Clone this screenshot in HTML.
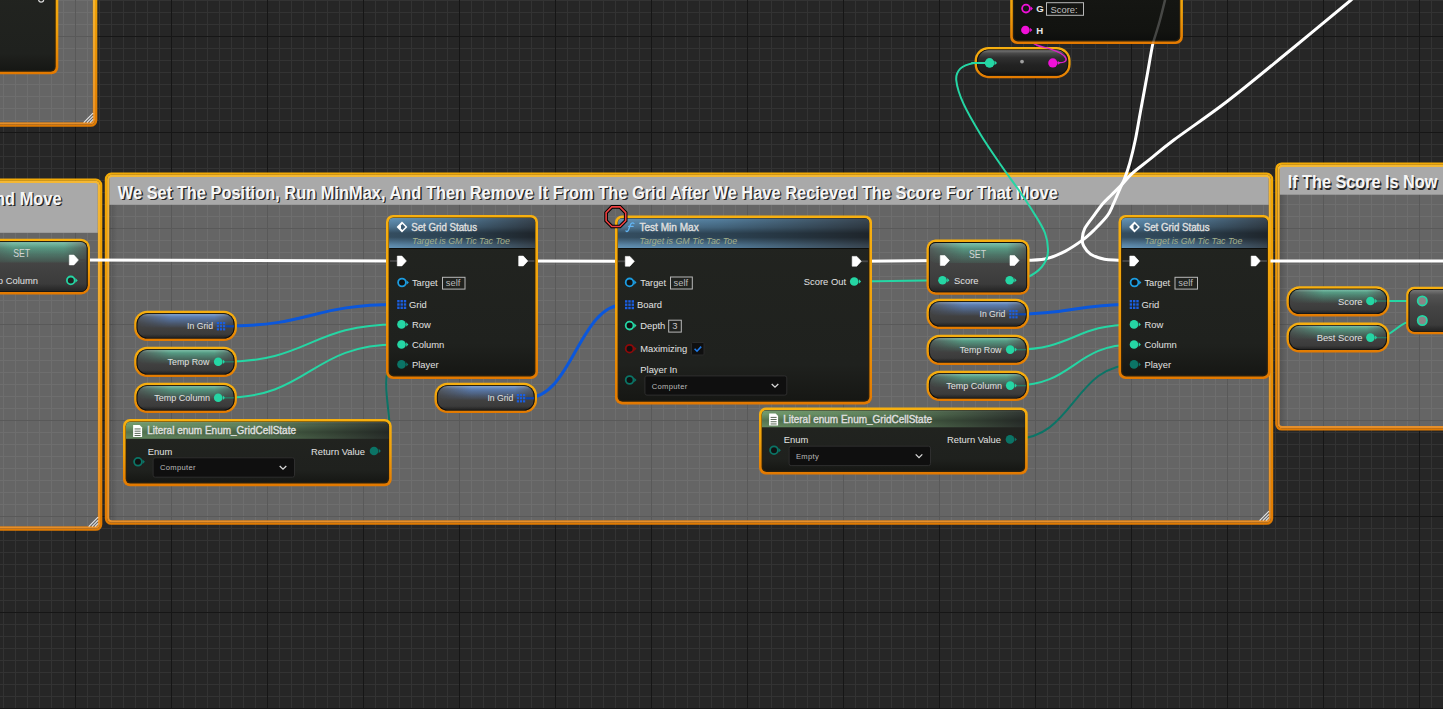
<!DOCTYPE html>
<html><head><meta charset="utf-8">
<style>
html,body{margin:0;padding:0;width:1443px;height:709px;overflow:hidden;}
body{background-color:#262626;
background-image:
 linear-gradient(90deg,#161616 1px,transparent 1px),
 linear-gradient(180deg,#161616 1px,transparent 1px),
 linear-gradient(90deg,#333333 1px,transparent 1px),
 linear-gradient(180deg,#333333 1px,transparent 1px);
background-size:96px 709px,1443px 96px,12px 709px,1443px 12px;
background-position:75px 0,0 36px,3px 0,0 0;
}
svg{position:absolute;left:0;top:0;font-family:"Liberation Sans",sans-serif;}
</style></head><body>
<svg width="1443" height="709" viewBox="0 0 1443 709">
<defs>
<linearGradient id="gOrC" x1="0" y1="0" x2="0" y2="1">
  <stop offset="0" stop-color="#f2aa06"/><stop offset="1" stop-color="#e07a02"/>
</linearGradient>
<linearGradient id="gOrC2" x1="0" y1="0" x2="0" y2="1">
  <stop offset="0" stop-color="#f4b834"/><stop offset="1" stop-color="#e68f2a"/>
</linearGradient>
<linearGradient id="gOrN" x1="0" y1="0" x2="0" y2="1">
  <stop offset="0" stop-color="#f7b010"/><stop offset="0.5" stop-color="#f0a00a"/><stop offset="1" stop-color="#e27800"/>
</linearGradient>
<linearGradient id="gShL" x1="0" y1="0" x2="1" y2="0">
  <stop offset="0" stop-color="#000" stop-opacity="0.16"/><stop offset="1" stop-color="#000" stop-opacity="0"/>
</linearGradient>
<linearGradient id="gPill" x1="0" y1="0" x2="0" y2="1">
  <stop offset="0" stop-color="#606060" stop-opacity="0.92"/><stop offset="0.4" stop-color="#4c4c4c" stop-opacity="0.88"/><stop offset="1" stop-color="#3c3c3c" stop-opacity="0.9"/>
</linearGradient>
<linearGradient id="gPillDark" x1="0" y1="0" x2="0" y2="1">
  <stop offset="0" stop-color="#5a5a5a"/><stop offset="0.3" stop-color="#303030"/><stop offset="0.6" stop-color="#222222"/><stop offset="1" stop-color="#1c1c1b"/>
</linearGradient>
<linearGradient id="gPillSh" x1="0" y1="0" x2="0" y2="1">
  <stop offset="0" stop-color="#fff" stop-opacity="0.18"/><stop offset="0.12" stop-color="#fff" stop-opacity="0"/><stop offset="0.85" stop-color="#000" stop-opacity="0"/><stop offset="1" stop-color="#000" stop-opacity="0.35"/>
</linearGradient>
<linearGradient id="gGlowBlue" x1="0" y1="0" x2="0" y2="1">
  <stop offset="0" stop-color="#6aa0f0" stop-opacity="0.75"/><stop offset="0.45" stop-color="#5a8ee0" stop-opacity="0.45"/><stop offset="1" stop-color="#5a8ee0" stop-opacity="0"/>
</linearGradient>
<linearGradient id="gGlowTeal" x1="0" y1="0" x2="0" y2="1">
  <stop offset="0" stop-color="#60d8b0" stop-opacity="0.7"/><stop offset="0.45" stop-color="#50c8a0" stop-opacity="0.4"/><stop offset="1" stop-color="#50c8a0" stop-opacity="0"/>
</linearGradient>
<linearGradient id="gGlowSet" x1="0" y1="0" x2="0" y2="1">
  <stop offset="0" stop-color="#64dcb4" stop-opacity="0.7"/><stop offset="0.6" stop-color="#50c8a0" stop-opacity="0.32"/><stop offset="1" stop-color="#50c8a0" stop-opacity="0.1"/>
</linearGradient>
<linearGradient id="gMaskH" x1="0" y1="0" x2="1" y2="0">
  <stop offset="0" stop-color="#fff" stop-opacity="0.15"/><stop offset="0.35" stop-color="#fff" stop-opacity="1"/><stop offset="0.8" stop-color="#fff" stop-opacity="1"/><stop offset="1" stop-color="#fff" stop-opacity="0.2"/>
</linearGradient>
<mask id="mGlowH" maskContentUnits="objectBoundingBox"><rect x="0" y="0" width="1" height="1" fill="url(#gMaskH)"/></mask>
<linearGradient id="gHdrFnH" x1="0" y1="0" x2="1" y2="0">
  <stop offset="0" stop-color="#6494b8"/><stop offset="0.4" stop-color="#55809f"/><stop offset="1" stop-color="#3a4753"/>
</linearGradient>
<linearGradient id="gHdrFnV" x1="0" y1="0" x2="0" y2="1">
  <stop offset="0" stop-color="#000" stop-opacity="0.0"/><stop offset="0.3" stop-color="#000" stop-opacity="0.22"/><stop offset="0.5" stop-color="#000" stop-opacity="0.48"/><stop offset="0.64" stop-color="#000" stop-opacity="0.48"/><stop offset="0.9" stop-color="#000" stop-opacity="0.1"/><stop offset="1" stop-color="#000" stop-opacity="0.0"/>
</linearGradient>
<linearGradient id="gHdrLitH" x1="0" y1="0" x2="1" y2="0">
  <stop offset="0" stop-color="#709a6c"/><stop offset="0.5" stop-color="#5d7f5a"/><stop offset="1" stop-color="#2f3531"/>
</linearGradient>
<linearGradient id="gHdrLitV" x1="0" y1="0" x2="0" y2="1">
  <stop offset="0" stop-color="#fff" stop-opacity="0.10"/><stop offset="0.2" stop-color="#000" stop-opacity="0.0"/><stop offset="0.6" stop-color="#000" stop-opacity="0.25"/><stop offset="1" stop-color="#000" stop-opacity="0.1"/>
</linearGradient>
<linearGradient id="gBody" x1="0" y1="0" x2="0" y2="1">
  <stop offset="0" stop-color="#222420"/><stop offset="0.8" stop-color="#1f211e"/><stop offset="1" stop-color="#161714"/>
</linearGradient>
<linearGradient id="gBodyTop" x1="0" y1="0" x2="0" y2="1">
  <stop offset="0" stop-color="#161714"/><stop offset="0.85" stop-color="#121310"/><stop offset="1" stop-color="#0e0f0d"/>
</linearGradient>
</defs>
<rect x="-15.5" y="-15.5" width="108.3" height="137.8" fill="#ffffff" fill-opacity="0.29"/>
<rect x="-15.5" y="-15.5" width="8" height="137.8" fill="url(#gShL)"/>
<path fill-rule="evenodd" fill="url(#gOrC)" d="M-13.50 -20.00h104.30a6.50 6.50 0 0 1 6.50 6.50v133.80a6.50 6.50 0 0 1 -6.50 6.50h-104.30a6.50 6.50 0 0 1 -6.50 -6.50v-133.80a6.50 6.50 0 0 1 6.50 -6.50z M-13.20 -17.70h103.70a4.50 4.50 0 0 1 4.50 4.50v133.20a4.50 4.50 0 0 1 -4.50 4.50h-103.70a4.50 4.50 0 0 1 -4.50 -4.50v-133.20a4.50 4.50 0 0 1 4.50 -4.50z"/>
<path fill-rule="evenodd" fill="url(#gOrC2)" d="M-13.20 -17.70h103.70a4.50 4.50 0 0 1 4.50 4.50v133.20a4.50 4.50 0 0 1 -4.50 4.50h-103.70a4.50 4.50 0 0 1 -4.50 -4.50v-133.20a4.50 4.50 0 0 1 4.50 -4.50z M-13.00 -15.50h103.30a2.50 2.50 0 0 1 2.50 2.50v132.80a2.50 2.50 0 0 1 -2.50 2.50h-103.30a2.50 2.50 0 0 1 -2.50 -2.50v-132.80a2.50 2.50 0 0 1 2.50 -2.50z"/>
<line x1="89.9" y1="122.6" x2="93.1" y2="119.4" stroke="#ffffff" stroke-width="1.1" stroke-opacity="0.85"/>
<line x1="86.9" y1="122.6" x2="93.1" y2="116.4" stroke="#ffffff" stroke-width="1.1" stroke-opacity="0.85"/>
<line x1="83.7" y1="122.6" x2="93.1" y2="113.2" stroke="#ffffff" stroke-width="1.1" stroke-opacity="0.85"/>
<rect x="-15.5" y="183.0" width="113.3" height="343.3" fill="#ffffff" fill-opacity="0.29"/>
<rect x="-15.5" y="183.0" width="8" height="343.3" fill="url(#gShL)"/>
<rect x="-15.5" y="183.0" width="113.3" height="49.8" fill="#a9a9a9"/>
<path fill-rule="evenodd" fill="url(#gOrC)" d="M-13.50 178.50h109.30a6.50 6.50 0 0 1 6.50 6.50v339.30a6.50 6.50 0 0 1 -6.50 6.50h-109.30a6.50 6.50 0 0 1 -6.50 -6.50v-339.30a6.50 6.50 0 0 1 6.50 -6.50z M-13.20 180.80h108.70a4.50 4.50 0 0 1 4.50 4.50v338.70a4.50 4.50 0 0 1 -4.50 4.50h-108.70a4.50 4.50 0 0 1 -4.50 -4.50v-338.70a4.50 4.50 0 0 1 4.50 -4.50z"/>
<path fill-rule="evenodd" fill="url(#gOrC2)" d="M-13.20 180.80h108.70a4.50 4.50 0 0 1 4.50 4.50v338.70a4.50 4.50 0 0 1 -4.50 4.50h-108.70a4.50 4.50 0 0 1 -4.50 -4.50v-338.70a4.50 4.50 0 0 1 4.50 -4.50z M-13.00 183.00h108.30a2.50 2.50 0 0 1 2.50 2.50v338.30a2.50 2.50 0 0 1 -2.50 2.50h-108.30a2.50 2.50 0 0 1 -2.50 -2.50v-338.30a2.50 2.50 0 0 1 2.50 -2.50z"/>
<text x="62.9" y="206.4" font-size="18.00" fill="#262626" font-weight="bold" font-style="normal" text-anchor="end" textLength="105.6" lengthAdjust="spacingAndGlyphs">Second Move</text>
<text x="61.5" y="205.0" font-size="18.00" fill="#f6f6f6" font-weight="bold" font-style="normal" text-anchor="end" textLength="105.6" lengthAdjust="spacingAndGlyphs" >Second Move</text>
<line x1="94.9" y1="526.6" x2="98.1" y2="523.4" stroke="#ffffff" stroke-width="1.1" stroke-opacity="0.85"/>
<line x1="91.9" y1="526.6" x2="98.1" y2="520.4" stroke="#ffffff" stroke-width="1.1" stroke-opacity="0.85"/>
<line x1="88.7" y1="526.6" x2="98.1" y2="517.2" stroke="#ffffff" stroke-width="1.1" stroke-opacity="0.85"/>
<rect x="109.3" y="177.0" width="1159.4" height="343.3" fill="#ffffff" fill-opacity="0.29"/>
<rect x="109.3" y="177.0" width="8" height="343.3" fill="url(#gShL)"/>
<rect x="109.3" y="177.0" width="1159.4" height="27.8" fill="#a9a9a9"/>
<path fill-rule="evenodd" fill="url(#gOrC)" d="M111.30 172.50h1155.40a6.50 6.50 0 0 1 6.50 6.50v339.30a6.50 6.50 0 0 1 -6.50 6.50h-1155.40a6.50 6.50 0 0 1 -6.50 -6.50v-339.30a6.50 6.50 0 0 1 6.50 -6.50z M111.60 174.80h1154.80a4.50 4.50 0 0 1 4.50 4.50v338.70a4.50 4.50 0 0 1 -4.50 4.50h-1154.80a4.50 4.50 0 0 1 -4.50 -4.50v-338.70a4.50 4.50 0 0 1 4.50 -4.50z"/>
<path fill-rule="evenodd" fill="url(#gOrC2)" d="M111.60 174.80h1154.80a4.50 4.50 0 0 1 4.50 4.50v338.70a4.50 4.50 0 0 1 -4.50 4.50h-1154.80a4.50 4.50 0 0 1 -4.50 -4.50v-338.70a4.50 4.50 0 0 1 4.50 -4.50z M111.80 177.00h1154.40a2.50 2.50 0 0 1 2.50 2.50v338.30a2.50 2.50 0 0 1 -2.50 2.50h-1154.40a2.50 2.50 0 0 1 -2.50 -2.50v-338.30a2.50 2.50 0 0 1 2.50 -2.50z"/>
<text x="119.2" y="200.4" font-size="18.00" fill="#262626" font-weight="bold" font-style="normal" text-anchor="start" textLength="940.0" lengthAdjust="spacingAndGlyphs">We Set The Position, Run MinMax, And Then Remove It From The Grid After We Have Recieved The Score For That Move</text>
<text x="117.8" y="199.0" font-size="18.00" fill="#f6f6f6" font-weight="bold" font-style="normal" text-anchor="start" textLength="940.0" lengthAdjust="spacingAndGlyphs" >We Set The Position, Run MinMax, And Then Remove It From The Grid After We Have Recieved The Score For That Move</text>
<line x1="1265.8" y1="520.6" x2="1269.0" y2="517.4" stroke="#ffffff" stroke-width="1.1" stroke-opacity="0.85"/>
<line x1="1262.8" y1="520.6" x2="1269.0" y2="514.4" stroke="#ffffff" stroke-width="1.1" stroke-opacity="0.85"/>
<line x1="1259.6" y1="520.6" x2="1269.0" y2="511.2" stroke="#ffffff" stroke-width="1.1" stroke-opacity="0.85"/>
<rect x="1279.7" y="166.9" width="178.8" height="259.2" fill="#ffffff" fill-opacity="0.29"/>
<rect x="1279.7" y="166.9" width="8" height="259.2" fill="url(#gShL)"/>
<rect x="1279.7" y="166.9" width="178.8" height="27.8" fill="#a9a9a9"/>
<path fill-rule="evenodd" fill="url(#gOrC)" d="M1281.70 162.40h174.80a6.50 6.50 0 0 1 6.50 6.50v255.20a6.50 6.50 0 0 1 -6.50 6.50h-174.80a6.50 6.50 0 0 1 -6.50 -6.50v-255.20a6.50 6.50 0 0 1 6.50 -6.50z M1282.00 164.70h174.20a4.50 4.50 0 0 1 4.50 4.50v254.60a4.50 4.50 0 0 1 -4.50 4.50h-174.20a4.50 4.50 0 0 1 -4.50 -4.50v-254.60a4.50 4.50 0 0 1 4.50 -4.50z"/>
<path fill-rule="evenodd" fill="url(#gOrC2)" d="M1282.00 164.70h174.20a4.50 4.50 0 0 1 4.50 4.50v254.60a4.50 4.50 0 0 1 -4.50 4.50h-174.20a4.50 4.50 0 0 1 -4.50 -4.50v-254.60a4.50 4.50 0 0 1 4.50 -4.50z M1282.20 166.90h173.80a2.50 2.50 0 0 1 2.50 2.50v254.20a2.50 2.50 0 0 1 -2.50 2.50h-173.80a2.50 2.50 0 0 1 -2.50 -2.50v-254.20a2.50 2.50 0 0 1 2.50 -2.50z"/>
<text x="1289.1" y="189.7" font-size="18.00" fill="#262626" font-weight="bold" font-style="normal" text-anchor="start" textLength="149.6" lengthAdjust="spacingAndGlyphs">If The Score Is Now</text>
<text x="1287.7" y="188.3" font-size="18.00" fill="#f6f6f6" font-weight="bold" font-style="normal" text-anchor="start" textLength="149.6" lengthAdjust="spacingAndGlyphs" >If The Score Is Now</text>
<line x1="1455.6" y1="426.4" x2="1458.8" y2="423.2" stroke="#ffffff" stroke-width="1.1" stroke-opacity="0.85"/>
<line x1="1452.6" y1="426.4" x2="1458.8" y2="420.2" stroke="#ffffff" stroke-width="1.1" stroke-opacity="0.85"/>
<line x1="1449.4" y1="426.4" x2="1458.8" y2="417.0" stroke="#ffffff" stroke-width="1.1" stroke-opacity="0.85"/>
<path d="M77.5 260 L397 261" fill="none" stroke="#ffffff" stroke-width="3.0" stroke-opacity="1.00" stroke-linecap="round"/>
<path d="M527 261 L625 261.3" fill="none" stroke="#ffffff" stroke-width="3.0" stroke-opacity="1.00" stroke-linecap="round"/>
<path d="M860.7 261.3 L940 260.5" fill="none" stroke="#ffffff" stroke-width="3.0" stroke-opacity="1.00" stroke-linecap="round"/>
<path d="M1018.0 260.5C1022.5 260.2 1037.2 260.5 1045.0 259.0C1052.8 257.5 1058.7 254.5 1065.0 251.3C1071.3 248.1 1077.9 243.5 1082.8 239.9C1087.7 236.3 1090.5 233.5 1094.6 229.5C1098.7 225.5 1104.3 219.9 1107.4 215.7C1110.5 211.5 1110.9 209.3 1113.3 204.2C1115.7 199.1 1119.8 189.0 1121.6 184.9C1123.4 180.8 1122.9 183.1 1124.3 179.4C1125.7 175.7 1128.0 169.5 1129.8 162.9C1131.6 156.3 1133.5 148.5 1135.3 140.0C1137.1 131.5 1138.4 122.8 1140.4 112.0C1142.4 101.2 1145.1 86.5 1147.2 75.0C1149.3 63.5 1150.9 52.5 1153.0 43.0C1155.1 33.5 1157.7 26.5 1160.0 18.0C1162.3 9.5 1165.8 -3.7 1167.0 -8.0" fill="none" stroke="#ffffff" stroke-width="3.0" stroke-opacity="1.00" stroke-linecap="round"/>
<path d="M1130.0 261.0C1128.0 260.9 1122.5 260.5 1118.3 260.2C1114.0 259.9 1109.1 260.2 1104.5 259.2C1099.9 258.2 1094.2 256.3 1090.7 254.2C1087.2 252.0 1085.2 248.9 1083.8 246.3C1082.4 243.7 1082.1 241.4 1082.3 238.4C1082.5 235.4 1082.7 232.6 1084.7 228.6C1086.8 224.6 1091.7 218.8 1094.6 214.7C1097.5 210.6 1099.5 207.5 1102.3 204.2C1105.1 200.9 1108.2 198.2 1111.4 195.0C1114.6 191.8 1118.2 188.4 1121.6 184.9C1125.0 181.4 1127.0 178.2 1131.7 173.9C1136.4 169.6 1143.0 164.8 1150.0 159.2C1157.0 153.5 1161.0 149.6 1173.8 140.0C1186.6 130.4 1207.6 116.4 1227.0 101.5C1246.4 86.6 1269.3 67.4 1290.0 50.5C1310.7 33.6 1339.0 9.9 1351.0 0.0C1363.0 -9.9 1360.2 -7.5 1362.0 -9.0" fill="none" stroke="#ffffff" stroke-width="3.0" stroke-opacity="1.00" stroke-linecap="round"/>
<path d="M1257 261 L1460 261" fill="none" stroke="#ffffff" stroke-width="3.0" stroke-opacity="1.00" stroke-linecap="round"/>
<path d="M226.0 326.0C312.0 326.0 311.0 304.5 397.0 304.5" fill="none" stroke="#0b57db" stroke-width="3.0" stroke-opacity="1.00" stroke-linecap="round"/>
<path d="M223.0 361.8C310.0 361.8 310.0 324.4 397.0 324.4" fill="none" stroke="#25d6a4" stroke-width="2.0" stroke-opacity="1.00" stroke-linecap="round"/>
<path d="M223.0 397.8C310.0 397.8 310.0 344.5 397.0 344.5" fill="none" stroke="#25d6a4" stroke-width="2.0" stroke-opacity="1.00" stroke-linecap="round"/>
<path d="M378.0 451.0C408.0 451.0 368.0 364.6 398.0 364.6" fill="none" stroke="#0b7466" stroke-width="2.0" stroke-opacity="1.00" stroke-linecap="round"/>
<path d="M526.0 398.0C573.0 398.0 578.0 304.6 625.0 304.6" fill="none" stroke="#0b57db" stroke-width="3.0" stroke-opacity="1.00" stroke-linecap="round"/>
<path d="M858 281.5 L942.5 280.3" fill="none" stroke="#25d6a4" stroke-width="2.0" stroke-opacity="1.00" stroke-linecap="round"/>
<path d="M1014.0 280.5C1016.3 279.9 1023.4 279.2 1028.0 277.0C1032.6 274.8 1038.4 270.9 1041.7 267.0C1045.0 263.1 1047.2 259.1 1047.8 253.4C1048.3 247.7 1047.7 240.3 1045.0 233.0C1042.3 225.7 1036.0 216.6 1031.5 209.3C1027.0 202.0 1023.1 196.3 1018.0 189.0C1012.9 181.7 1007.2 174.4 1001.0 165.3C994.8 156.2 986.9 144.9 980.7 134.7C974.5 124.5 967.8 113.2 963.7 104.2C959.6 95.2 956.9 86.4 956.3 80.5C955.7 74.6 957.4 71.5 960.3 68.6C963.2 65.7 969.6 63.8 973.9 62.9C978.2 62.0 984.0 62.9 986.0 62.9" fill="none" stroke="#25d6a4" stroke-width="2.0" stroke-opacity="1.00" stroke-linecap="round"/>
<path d="M1017.0 314.0C1073.0 314.0 1074.0 304.5 1130.0 304.5" fill="none" stroke="#0b57db" stroke-width="3.0" stroke-opacity="1.00" stroke-linecap="round"/>
<path d="M1014.0 349.6C1074.0 349.6 1074.0 324.4 1134.0 324.4" fill="none" stroke="#25d6a4" stroke-width="2.0" stroke-opacity="1.00" stroke-linecap="round"/>
<path d="M1014.0 385.6C1074.0 385.6 1074.0 344.5 1134.0 344.5" fill="none" stroke="#25d6a4" stroke-width="2.0" stroke-opacity="1.00" stroke-linecap="round"/>
<path d="M1014.0 439.0C1074.0 439.0 1074.0 364.4 1134.0 364.4" fill="none" stroke="#0b7466" stroke-width="2.0" stroke-opacity="1.00" stroke-linecap="round"/>
<path d="M1374 301 L1422 300.9" fill="none" stroke="#25d6a4" stroke-width="2.0" stroke-opacity="1.00" stroke-linecap="round"/>
<path d="M1374.0 337.6C1396.0 337.6 1396.0 320.5 1418.0 320.5" fill="none" stroke="#25d6a4" stroke-width="2.0" stroke-opacity="1.00" stroke-linecap="round"/>
<rect x="386.0" y="215.0" width="152.0" height="164.0" rx="7.0" fill="url(#gOrN)"/>
<rect x="388.6" y="217.6" width="146.8" height="158.8" rx="5.0" fill="#2a200e"/>
<rect x="389.9" y="218.9" width="144.2" height="156.2" rx="4.0" fill="url(#gBody)"/>
<path d="M393.0 218.0h138.0a4 4 0 0 1 4 4v26.0h-146.0v-26.0a4 4 0 0 1 4 -4z" fill="url(#gHdrFnH)"/>
<path d="M393.0 218.0h138.0a4 4 0 0 1 4 4v26.0h-146.0v-26.0a4 4 0 0 1 4 -4z" fill="url(#gHdrFnV)"/>
<line x1="389.6" y1="248.5" x2="534.4" y2="248.5" stroke="#0d0e0c" stroke-width="1"/>
<path d="M402.0 221.6l5.4 5.4l-5.4 5.4l-5.4 -5.4z" fill="#ffffff"/>
<path d="M402.4 224.0l3.0 3.0l-3.0 3.0l-3.0 -3.0z" fill="#3a5a72"/>
<rect x="398.8" y="225.4" width="2.2" height="3.2" fill="#ffffff"/>
<text x="411.2" y="230.6" font-size="10.60" fill="#e0e0e0" font-weight="normal" font-style="normal" text-anchor="start" textLength="65.8" lengthAdjust="spacingAndGlyphs" stroke="#e0e0e0" stroke-width="0.35">Set Grid Status</text>
<text x="412.1" y="244.1" font-size="9.90" fill="#a4b08c" font-weight="normal" font-style="italic" text-anchor="start" textLength="97.8" lengthAdjust="spacingAndGlyphs" >Target is GM Tic Tac Toe</text>
<line x1="390.0" y1="261.0" x2="397.0" y2="261.0" stroke="#484848" stroke-width="1.8"/>
<path d="M397.3 256.1h4.6l4.5 4.9l-4.5 4.9h-4.6z" fill="#ffffff" stroke="#ffffff" stroke-width="0.6" stroke-linejoin="round"/>
<line x1="527.9" y1="261.0" x2="534.4" y2="261.0" stroke="#484848" stroke-width="1.8"/>
<path d="M518.7 256.1h4.6l4.5 4.9l-4.5 4.9h-4.6z" fill="#ffffff" stroke="#ffffff" stroke-width="0.6" stroke-linejoin="round"/>
<circle cx="402.0" cy="282.5" r="3.9" fill="#111" stroke="#1c9ce0" stroke-width="1.8"/>
<path d="M406.6 280.2l2.3 2.3l-2.3 2.3z" fill="#1c9ce0"/>
<text x="412.0" y="286.3" font-size="9.40" fill="#e2e2e2" font-weight="normal" font-style="normal" text-anchor="start" textLength="25.7" lengthAdjust="spacingAndGlyphs" >Target</text>
<rect x="442.5" y="277.3" width="22.5" height="11.8" fill="none" stroke="#b8b8b8" stroke-width="1"/>
<text x="445.8" y="286.3" font-size="9.40" fill="#b8b8b8" font-weight="normal" font-style="normal" text-anchor="start" >self</text>
<rect x="397.20" y="300.00" width="2.40" height="2.40" fill="#1a5ee0"/>
<rect x="397.20" y="303.30" width="2.40" height="2.40" fill="#1a5ee0"/>
<rect x="397.20" y="306.60" width="2.40" height="2.40" fill="#1a5ee0"/>
<rect x="400.50" y="300.00" width="2.40" height="2.40" fill="#1a5ee0"/>
<rect x="400.50" y="303.30" width="2.40" height="2.40" fill="#1a5ee0"/>
<rect x="400.50" y="306.60" width="2.40" height="2.40" fill="#1a5ee0"/>
<rect x="403.80" y="300.00" width="2.40" height="2.40" fill="#1a5ee0"/>
<rect x="403.80" y="303.30" width="2.40" height="2.40" fill="#1a5ee0"/>
<rect x="403.80" y="306.60" width="2.40" height="2.40" fill="#1a5ee0"/>
<text x="409.0" y="308.0" font-size="9.40" fill="#e2e2e2" font-weight="normal" font-style="normal" text-anchor="start" >Grid</text>
<circle cx="401.5" cy="324.4" r="4.3" fill="#25d6a4"/>
<path d="M406.2 322.2l2.2 2.2l-2.2 2.2z" fill="#25d6a4"/>
<text x="412.0" y="328.0" font-size="9.40" fill="#e2e2e2" font-weight="normal" font-style="normal" text-anchor="start" >Row</text>
<circle cx="401.5" cy="344.5" r="4.3" fill="#25d6a4"/>
<path d="M406.2 342.3l2.2 2.2l-2.2 2.2z" fill="#25d6a4"/>
<text x="412.0" y="348.0" font-size="9.40" fill="#e2e2e2" font-weight="normal" font-style="normal" text-anchor="start" >Column</text>
<circle cx="401.5" cy="364.4" r="4.3" fill="#0b7466"/>
<path d="M406.2 362.2l2.2 2.2l-2.2 2.2z" fill="#0b7466"/>
<text x="412.0" y="368.2" font-size="9.40" fill="#e2e2e2" font-weight="normal" font-style="normal" text-anchor="start" >Player</text>
<rect x="1118.5" y="215.0" width="152.0" height="164.0" rx="7.0" fill="url(#gOrN)"/>
<rect x="1121.1" y="217.6" width="146.8" height="158.8" rx="5.0" fill="#2a200e"/>
<rect x="1122.4" y="218.9" width="144.2" height="156.2" rx="4.0" fill="url(#gBody)"/>
<path d="M1125.5 218.0h138.0a4 4 0 0 1 4 4v26.0h-146.0v-26.0a4 4 0 0 1 4 -4z" fill="url(#gHdrFnH)"/>
<path d="M1125.5 218.0h138.0a4 4 0 0 1 4 4v26.0h-146.0v-26.0a4 4 0 0 1 4 -4z" fill="url(#gHdrFnV)"/>
<line x1="1122.1" y1="248.5" x2="1266.9" y2="248.5" stroke="#0d0e0c" stroke-width="1"/>
<path d="M1134.5 221.6l5.4 5.4l-5.4 5.4l-5.4 -5.4z" fill="#ffffff"/>
<path d="M1134.9 224.0l3.0 3.0l-3.0 3.0l-3.0 -3.0z" fill="#3a5a72"/>
<rect x="1131.3" y="225.4" width="2.2" height="3.2" fill="#ffffff"/>
<text x="1143.7" y="230.6" font-size="10.60" fill="#e0e0e0" font-weight="normal" font-style="normal" text-anchor="start" textLength="65.8" lengthAdjust="spacingAndGlyphs" stroke="#e0e0e0" stroke-width="0.35">Set Grid Status</text>
<text x="1144.6" y="244.1" font-size="9.90" fill="#a4b08c" font-weight="normal" font-style="italic" text-anchor="start" textLength="97.8" lengthAdjust="spacingAndGlyphs" >Target is GM Tic Tac Toe</text>
<line x1="1122.5" y1="261.0" x2="1129.5" y2="261.0" stroke="#484848" stroke-width="1.8"/>
<path d="M1129.8 256.1h4.6l4.5 4.9l-4.5 4.9h-4.6z" fill="#ffffff" stroke="#ffffff" stroke-width="0.6" stroke-linejoin="round"/>
<line x1="1260.4" y1="261.0" x2="1266.9" y2="261.0" stroke="#484848" stroke-width="1.8"/>
<path d="M1251.2 256.1h4.6l4.5 4.9l-4.5 4.9h-4.6z" fill="#ffffff" stroke="#ffffff" stroke-width="0.6" stroke-linejoin="round"/>
<circle cx="1134.5" cy="282.5" r="3.9" fill="#111" stroke="#1c9ce0" stroke-width="1.8"/>
<path d="M1139.1 280.2l2.3 2.3l-2.3 2.3z" fill="#1c9ce0"/>
<text x="1144.5" y="286.3" font-size="9.40" fill="#e2e2e2" font-weight="normal" font-style="normal" text-anchor="start" textLength="25.7" lengthAdjust="spacingAndGlyphs" >Target</text>
<rect x="1175.0" y="277.3" width="22.5" height="11.8" fill="none" stroke="#b8b8b8" stroke-width="1"/>
<text x="1178.3" y="286.3" font-size="9.40" fill="#b8b8b8" font-weight="normal" font-style="normal" text-anchor="start" >self</text>
<rect x="1129.70" y="300.00" width="2.40" height="2.40" fill="#1a5ee0"/>
<rect x="1129.70" y="303.30" width="2.40" height="2.40" fill="#1a5ee0"/>
<rect x="1129.70" y="306.60" width="2.40" height="2.40" fill="#1a5ee0"/>
<rect x="1133.00" y="300.00" width="2.40" height="2.40" fill="#1a5ee0"/>
<rect x="1133.00" y="303.30" width="2.40" height="2.40" fill="#1a5ee0"/>
<rect x="1133.00" y="306.60" width="2.40" height="2.40" fill="#1a5ee0"/>
<rect x="1136.30" y="300.00" width="2.40" height="2.40" fill="#1a5ee0"/>
<rect x="1136.30" y="303.30" width="2.40" height="2.40" fill="#1a5ee0"/>
<rect x="1136.30" y="306.60" width="2.40" height="2.40" fill="#1a5ee0"/>
<text x="1141.5" y="308.0" font-size="9.40" fill="#e2e2e2" font-weight="normal" font-style="normal" text-anchor="start" >Grid</text>
<circle cx="1134.0" cy="324.4" r="4.3" fill="#25d6a4"/>
<path d="M1138.7 322.2l2.2 2.2l-2.2 2.2z" fill="#25d6a4"/>
<text x="1144.5" y="328.0" font-size="9.40" fill="#e2e2e2" font-weight="normal" font-style="normal" text-anchor="start" >Row</text>
<circle cx="1134.0" cy="344.5" r="4.3" fill="#25d6a4"/>
<path d="M1138.7 342.3l2.2 2.2l-2.2 2.2z" fill="#25d6a4"/>
<text x="1144.5" y="348.0" font-size="9.40" fill="#e2e2e2" font-weight="normal" font-style="normal" text-anchor="start" >Column</text>
<circle cx="1134.0" cy="364.4" r="4.3" fill="#0b7466"/>
<path d="M1138.7 362.2l2.2 2.2l-2.2 2.2z" fill="#0b7466"/>
<text x="1144.5" y="368.2" font-size="9.40" fill="#e2e2e2" font-weight="normal" font-style="normal" text-anchor="start" >Player</text>
<rect x="615.0" y="215.4" width="257.0" height="189.0" rx="7.0" fill="url(#gOrN)"/>
<rect x="617.6" y="218.0" width="251.8" height="183.8" rx="5.0" fill="#2a200e"/>
<rect x="618.9" y="219.3" width="249.2" height="181.2" rx="4.0" fill="url(#gBody)"/>
<path d="M622.0 218.4h243.0a4 4 0 0 1 4 4v25.6h-251.0v-25.6a4 4 0 0 1 4 -4z" fill="url(#gHdrFnH)"/>
<path d="M622.0 218.4h243.0a4 4 0 0 1 4 4v25.6h-251.0v-25.6a4 4 0 0 1 4 -4z" fill="url(#gHdrFnV)"/>
<line x1="618.6" y1="248.5" x2="868.4" y2="248.5" stroke="#0d0e0c" stroke-width="1"/>
<path d="M634 223.6C632.8 222.4 631 222.9 630.4 224.8L628.6 229.8C628 231.6 626.8 232 625.9 230.9M628.6 226.3H633.2" fill="none" stroke="#62b4f2" stroke-width="1.3" stroke-linecap="round"/>
<text x="639.4" y="230.8" font-size="10.60" fill="#e0e0e0" font-weight="normal" font-style="normal" text-anchor="start" textLength="59.3" lengthAdjust="spacingAndGlyphs" stroke="#e0e0e0" stroke-width="0.35">Test Min Max</text>
<text x="639.4" y="244.1" font-size="9.90" fill="#a4b08c" font-weight="normal" font-style="italic" text-anchor="start" textLength="97.8" lengthAdjust="spacingAndGlyphs" >Target is GM Tic Tac Toe</text>
<line x1="618.0" y1="261.3" x2="625.0" y2="261.3" stroke="#484848" stroke-width="1.8"/>
<path d="M625.3 256.4h4.6l4.5 4.9l-4.5 4.9h-4.6z" fill="#ffffff" stroke="#ffffff" stroke-width="0.6" stroke-linejoin="round"/>
<line x1="861.4" y1="261.3" x2="867.9" y2="261.3" stroke="#484848" stroke-width="1.8"/>
<path d="M852.2 256.4h4.6l4.5 4.9l-4.5 4.9h-4.6z" fill="#ffffff" stroke="#ffffff" stroke-width="0.6" stroke-linejoin="round"/>
<circle cx="629.6" cy="282.4" r="3.9" fill="#111" stroke="#1c9ce0" stroke-width="1.8"/>
<path d="M634.2 280.1l2.3 2.3l-2.3 2.3z" fill="#1c9ce0"/>
<text x="640.3" y="286.4" font-size="9.40" fill="#e2e2e2" font-weight="normal" font-style="normal" text-anchor="start" textLength="25.7" lengthAdjust="spacingAndGlyphs" >Target</text>
<rect x="670.5" y="277.0" width="21.8" height="12.0" fill="none" stroke="#b8b8b8" stroke-width="1"/>
<text x="673.6" y="286.2" font-size="9.40" fill="#b8b8b8" font-weight="normal" font-style="normal" text-anchor="start" >self</text>
<text x="846.0" y="284.7" font-size="9.40" fill="#e2e2e2" font-weight="normal" font-style="normal" text-anchor="end" >Score Out</text>
<circle cx="854.2" cy="281.5" r="4.3" fill="#25d6a4"/>
<path d="M858.9 279.3l2.2 2.2l-2.2 2.2z" fill="#25d6a4"/>
<rect x="625.00" y="300.20" width="2.40" height="2.40" fill="#1a5ee0"/>
<rect x="625.00" y="303.50" width="2.40" height="2.40" fill="#1a5ee0"/>
<rect x="625.00" y="306.80" width="2.40" height="2.40" fill="#1a5ee0"/>
<rect x="628.30" y="300.20" width="2.40" height="2.40" fill="#1a5ee0"/>
<rect x="628.30" y="303.50" width="2.40" height="2.40" fill="#1a5ee0"/>
<rect x="628.30" y="306.80" width="2.40" height="2.40" fill="#1a5ee0"/>
<rect x="631.60" y="300.20" width="2.40" height="2.40" fill="#1a5ee0"/>
<rect x="631.60" y="303.50" width="2.40" height="2.40" fill="#1a5ee0"/>
<rect x="631.60" y="306.80" width="2.40" height="2.40" fill="#1a5ee0"/>
<text x="637.0" y="307.6" font-size="9.40" fill="#e2e2e2" font-weight="normal" font-style="normal" text-anchor="start" >Board</text>
<circle cx="629.6" cy="325.6" r="3.9" fill="#111" stroke="#25d6a4" stroke-width="1.8"/>
<path d="M634.2 323.3l2.3 2.3l-2.3 2.3z" fill="#25d6a4"/>
<text x="640.3" y="328.7" font-size="9.40" fill="#e2e2e2" font-weight="normal" font-style="normal" text-anchor="start" >Depth</text>
<rect x="668.7" y="320.2" width="12.6" height="11.9" fill="none" stroke="#b8b8b8" stroke-width="1"/>
<text x="672.2" y="329.2" font-size="9.40" fill="#c8c8c8" font-weight="normal" font-style="normal" text-anchor="start" >3</text>
<circle cx="629.6" cy="348.7" r="3.9" fill="#111" stroke="#8c0a0a" stroke-width="1.8"/>
<path d="M634.2 346.4l2.3 2.3l-2.3 2.3z" fill="#8c0a0a"/>
<text x="640.3" y="351.8" font-size="9.40" fill="#e2e2e2" font-weight="normal" font-style="normal" text-anchor="start" >Maximizing</text>
<rect x="691.5" y="342.5" width="12.5" height="12.5" rx="1" fill="#0f0f0f" stroke="#2a2a2a" stroke-width="1"/>
<path d="M694.6 348.8l2.4 2.4l4.2 -4.6" fill="none" stroke="#1e7ae8" stroke-width="1.6"/>
<text x="640.3" y="372.8" font-size="9.40" fill="#e2e2e2" font-weight="normal" font-style="normal" text-anchor="start" >Player In</text>
<circle cx="629.6" cy="380.0" r="3.9" fill="#111" stroke="#0b7466" stroke-width="1.8"/>
<path d="M634.2 377.7l2.3 2.3l-2.3 2.3z" fill="#0b7466"/>
<rect x="644.9" y="375.9" width="141.9" height="19.2" rx="2" fill="#0f0f0f" stroke="#2e2e2e" stroke-width="1"/>
<text x="651.8" y="388.6" font-size="7.60" fill="#bbbbbb" font-weight="normal" font-style="normal" text-anchor="start" letter-spacing="0.3">Computer</text>
<path d="M771.7 384.0l3.3 3.2l3.3 -3.2" fill="none" stroke="#d8d8d8" stroke-width="1.3"/>
<rect x="-30.0" y="238.8" width="120.0" height="55.7" rx="9.0" fill="url(#gOrN)"/>
<rect x="-27.6" y="241.2" width="115.2" height="50.9" rx="6.8" fill="#262626"/>
<rect x="-27.6" y="241.2" width="115.2" height="50.9" rx="6.8" fill="#0d0d0c" fill-opacity="0.9"/>
<rect x="-26.7" y="242.1" width="113.4" height="49.1" rx="5.8" fill="url(#gPill)"/>
<rect x="-26.7" y="242.1" width="113.4" height="20.6" rx="5.8" fill="url(#gGlowSet)" mask="url(#mGlowH)"/>
<rect x="-26.7" y="242.1" width="113.4" height="49.1" rx="5.8" fill="url(#gPillSh)"/>
<text x="13.2" y="256.8" font-size="10.20" fill="#d4d4d4" font-weight="normal" font-style="normal" text-anchor="start" textLength="17.0" lengthAdjust="spacingAndGlyphs" >SET</text>
<line x1="78.5" y1="260.0" x2="85.0" y2="260.0" stroke="#484848" stroke-width="1.8"/>
<path d="M69.3 255.1h4.6l4.5 4.9l-4.5 4.9h-4.6z" fill="#ffffff" stroke="#ffffff" stroke-width="0.6" stroke-linejoin="round"/>
<text x="38.0" y="284.0" font-size="9.40" fill="#e2e2e2" font-weight="normal" font-style="normal" text-anchor="end" >Temp Column</text>
<circle cx="70.8" cy="280.4" r="3.9" fill="#222" stroke="#25d6a4" stroke-width="1.8"/>
<path d="M75.4 278.1l2.3 2.3l-2.3 2.3z" fill="#25d6a4"/>
<rect x="926.5" y="239.6" width="103.0" height="55.1" rx="9.0" fill="url(#gOrN)"/>
<rect x="928.9" y="242.0" width="98.2" height="50.3" rx="6.8" fill="#262626"/>
<rect x="928.9" y="242.0" width="98.2" height="50.3" rx="6.8" fill="#0d0d0c" fill-opacity="0.9"/>
<rect x="929.8" y="242.9" width="96.4" height="48.5" rx="5.8" fill="url(#gPill)"/>
<rect x="929.8" y="242.9" width="96.4" height="20.4" rx="5.8" fill="url(#gGlowSet)" mask="url(#mGlowH)"/>
<rect x="929.8" y="242.9" width="96.4" height="48.5" rx="5.8" fill="url(#gPillSh)"/>
<text x="977.5" y="257.5" font-size="10.20" fill="#d4d4d4" font-weight="normal" font-style="normal" text-anchor="middle" textLength="17.0" lengthAdjust="spacingAndGlyphs" >SET</text>
<path d="M940.3 255.6h4.6l4.5 4.9l-4.5 4.9h-4.6z" fill="#ffffff" stroke="#ffffff" stroke-width="0.6" stroke-linejoin="round"/>
<line x1="1019.2" y1="260.5" x2="1025.7" y2="260.5" stroke="#484848" stroke-width="1.8"/>
<path d="M1010.0 255.6h4.6l4.5 4.9l-4.5 4.9h-4.6z" fill="#ffffff" stroke="#ffffff" stroke-width="0.6" stroke-linejoin="round"/>
<circle cx="942.5" cy="280.3" r="4.3" fill="#25d6a4"/>
<path d="M947.2 278.1l2.2 2.2l-2.2 2.2z" fill="#25d6a4"/>
<text x="954.0" y="284.2" font-size="9.40" fill="#e2e2e2" font-weight="normal" font-style="normal" text-anchor="start" >Score</text>
<circle cx="1009.7" cy="280.3" r="4.3" fill="#25d6a4"/>
<path d="M1014.4 278.1l2.2 2.2l-2.2 2.2z" fill="#25d6a4"/>
<rect x="134.2" y="310.8" width="102.7" height="30.2" rx="13.0" fill="url(#gOrN)"/>
<rect x="136.6" y="313.2" width="97.9" height="25.4" rx="10.8" fill="#262626"/>
<rect x="136.6" y="313.2" width="97.9" height="25.4" rx="10.8" fill="#0d0d0c" fill-opacity="0.9"/>
<rect x="137.5" y="314.1" width="96.1" height="23.6" rx="9.8" fill="url(#gPill)"/>
<rect x="137.5" y="314.1" width="96.1" height="14.2" rx="9.8" fill="url(#gGlowBlue)" mask="url(#mGlowH)"/>
<rect x="137.5" y="314.1" width="96.1" height="23.6" rx="9.8" fill="url(#gPillSh)"/>
<text x="213.0" y="329.1" font-size="9.40" fill="#e2e2e2" font-weight="normal" font-style="normal" text-anchor="end" textLength="25.9" lengthAdjust="spacingAndGlyphs" >In Grid</text>
<rect x="216.80" y="322.00" width="2.20" height="2.20" fill="#1a5ee0"/>
<rect x="216.80" y="325.10" width="2.20" height="2.20" fill="#1a5ee0"/>
<rect x="216.80" y="328.20" width="2.20" height="2.20" fill="#1a5ee0"/>
<rect x="219.90" y="322.00" width="2.20" height="2.20" fill="#1a5ee0"/>
<rect x="219.90" y="325.10" width="2.20" height="2.20" fill="#1a5ee0"/>
<rect x="219.90" y="328.20" width="2.20" height="2.20" fill="#1a5ee0"/>
<rect x="223.00" y="322.00" width="2.20" height="2.20" fill="#1a5ee0"/>
<rect x="223.00" y="325.10" width="2.20" height="2.20" fill="#1a5ee0"/>
<rect x="223.00" y="328.20" width="2.20" height="2.20" fill="#1a5ee0"/>
<line x1="225.8" y1="326.3" x2="233.9" y2="326.3" stroke="#0b45b0" stroke-width="2.2"/>
<rect x="134.2" y="346.8" width="102.7" height="30.2" rx="13.0" fill="url(#gOrN)"/>
<rect x="136.6" y="349.2" width="97.9" height="25.4" rx="10.8" fill="#262626"/>
<rect x="136.6" y="349.2" width="97.9" height="25.4" rx="10.8" fill="#0d0d0c" fill-opacity="0.9"/>
<rect x="137.5" y="350.1" width="96.1" height="23.6" rx="9.8" fill="url(#gPill)"/>
<rect x="137.5" y="350.1" width="96.1" height="14.2" rx="9.8" fill="url(#gGlowTeal)" mask="url(#mGlowH)"/>
<rect x="137.5" y="350.1" width="96.1" height="23.6" rx="9.8" fill="url(#gPillSh)"/>
<text x="209.4" y="365.1" font-size="9.40" fill="#e2e2e2" font-weight="normal" font-style="normal" text-anchor="end" textLength="41.8" lengthAdjust="spacingAndGlyphs" >Temp Row</text>
<circle cx="218.2" cy="361.8" r="4.3" fill="#25d6a4"/>
<path d="M222.9 359.6l2.2 2.2l-2.2 2.2z" fill="#25d6a4"/>
<line x1="224.2" y1="361.8" x2="233.9" y2="361.8" stroke="#1a9a78" stroke-width="1.5" stroke-opacity="0.6"/>
<rect x="134.2" y="382.8" width="102.7" height="30.2" rx="13.0" fill="url(#gOrN)"/>
<rect x="136.6" y="385.2" width="97.9" height="25.4" rx="10.8" fill="#262626"/>
<rect x="136.6" y="385.2" width="97.9" height="25.4" rx="10.8" fill="#0d0d0c" fill-opacity="0.9"/>
<rect x="137.5" y="386.1" width="96.1" height="23.6" rx="9.8" fill="url(#gPill)"/>
<rect x="137.5" y="386.1" width="96.1" height="14.2" rx="9.8" fill="url(#gGlowTeal)" mask="url(#mGlowH)"/>
<rect x="137.5" y="386.1" width="96.1" height="23.6" rx="9.8" fill="url(#gPillSh)"/>
<text x="210.0" y="401.1" font-size="9.40" fill="#e2e2e2" font-weight="normal" font-style="normal" text-anchor="end" textLength="55.8" lengthAdjust="spacingAndGlyphs" >Temp Column</text>
<circle cx="218.2" cy="397.8" r="4.3" fill="#25d6a4"/>
<path d="M222.9 395.6l2.2 2.2l-2.2 2.2z" fill="#25d6a4"/>
<line x1="224.2" y1="397.8" x2="233.9" y2="397.8" stroke="#1a9a78" stroke-width="1.5" stroke-opacity="0.6"/>
<rect x="434.5" y="382.8" width="102.5" height="30.2" rx="13.0" fill="url(#gOrN)"/>
<rect x="436.9" y="385.2" width="97.7" height="25.4" rx="10.8" fill="#262626"/>
<rect x="436.9" y="385.2" width="97.7" height="25.4" rx="10.8" fill="#0d0d0c" fill-opacity="0.9"/>
<rect x="437.8" y="386.1" width="95.9" height="23.6" rx="9.8" fill="url(#gPill)"/>
<rect x="437.8" y="386.1" width="95.9" height="14.2" rx="9.8" fill="url(#gGlowBlue)" mask="url(#mGlowH)"/>
<rect x="437.8" y="386.1" width="95.9" height="23.6" rx="9.8" fill="url(#gPillSh)"/>
<text x="513.3" y="401.1" font-size="9.40" fill="#e2e2e2" font-weight="normal" font-style="normal" text-anchor="end" textLength="25.9" lengthAdjust="spacingAndGlyphs" >In Grid</text>
<rect x="516.80" y="394.00" width="2.20" height="2.20" fill="#1a5ee0"/>
<rect x="516.80" y="397.10" width="2.20" height="2.20" fill="#1a5ee0"/>
<rect x="516.80" y="400.20" width="2.20" height="2.20" fill="#1a5ee0"/>
<rect x="519.90" y="394.00" width="2.20" height="2.20" fill="#1a5ee0"/>
<rect x="519.90" y="397.10" width="2.20" height="2.20" fill="#1a5ee0"/>
<rect x="519.90" y="400.20" width="2.20" height="2.20" fill="#1a5ee0"/>
<rect x="523.00" y="394.00" width="2.20" height="2.20" fill="#1a5ee0"/>
<rect x="523.00" y="397.10" width="2.20" height="2.20" fill="#1a5ee0"/>
<rect x="523.00" y="400.20" width="2.20" height="2.20" fill="#1a5ee0"/>
<line x1="525.8" y1="398.3" x2="534.0" y2="398.3" stroke="#0b45b0" stroke-width="2.2"/>
<rect x="926.5" y="298.8" width="102.5" height="30.2" rx="13.0" fill="url(#gOrN)"/>
<rect x="928.9" y="301.2" width="97.7" height="25.4" rx="10.8" fill="#262626"/>
<rect x="928.9" y="301.2" width="97.7" height="25.4" rx="10.8" fill="#0d0d0c" fill-opacity="0.9"/>
<rect x="929.8" y="302.1" width="95.9" height="23.6" rx="9.8" fill="url(#gPill)"/>
<rect x="929.8" y="302.1" width="95.9" height="14.2" rx="9.8" fill="url(#gGlowBlue)" mask="url(#mGlowH)"/>
<rect x="929.8" y="302.1" width="95.9" height="23.6" rx="9.8" fill="url(#gPillSh)"/>
<text x="1005.4" y="317.3" font-size="9.40" fill="#e2e2e2" font-weight="normal" font-style="normal" text-anchor="end" textLength="25.9" lengthAdjust="spacingAndGlyphs" >In Grid</text>
<rect x="1009.20" y="310.00" width="2.20" height="2.20" fill="#1a5ee0"/>
<rect x="1009.20" y="313.10" width="2.20" height="2.20" fill="#1a5ee0"/>
<rect x="1009.20" y="316.20" width="2.20" height="2.20" fill="#1a5ee0"/>
<rect x="1012.30" y="310.00" width="2.20" height="2.20" fill="#1a5ee0"/>
<rect x="1012.30" y="313.10" width="2.20" height="2.20" fill="#1a5ee0"/>
<rect x="1012.30" y="316.20" width="2.20" height="2.20" fill="#1a5ee0"/>
<rect x="1015.40" y="310.00" width="2.20" height="2.20" fill="#1a5ee0"/>
<rect x="1015.40" y="313.10" width="2.20" height="2.20" fill="#1a5ee0"/>
<rect x="1015.40" y="316.20" width="2.20" height="2.20" fill="#1a5ee0"/>
<line x1="1018.2" y1="314.3" x2="1026.0" y2="314.3" stroke="#0b45b0" stroke-width="2.2"/>
<rect x="926.5" y="334.8" width="102.5" height="30.2" rx="13.0" fill="url(#gOrN)"/>
<rect x="928.9" y="337.2" width="97.7" height="25.4" rx="10.8" fill="#262626"/>
<rect x="928.9" y="337.2" width="97.7" height="25.4" rx="10.8" fill="#0d0d0c" fill-opacity="0.9"/>
<rect x="929.8" y="338.1" width="95.9" height="23.6" rx="9.8" fill="url(#gPill)"/>
<rect x="929.8" y="338.1" width="95.9" height="14.2" rx="9.8" fill="url(#gGlowTeal)" mask="url(#mGlowH)"/>
<rect x="929.8" y="338.1" width="95.9" height="23.6" rx="9.8" fill="url(#gPillSh)"/>
<text x="1001.5" y="353.2" font-size="9.40" fill="#e2e2e2" font-weight="normal" font-style="normal" text-anchor="end" textLength="41.8" lengthAdjust="spacingAndGlyphs" >Temp Row</text>
<circle cx="1010.2" cy="349.6" r="4.3" fill="#25d6a4"/>
<path d="M1014.9 347.4l2.2 2.2l-2.2 2.2z" fill="#25d6a4"/>
<line x1="1016.2" y1="349.6" x2="1026.0" y2="349.6" stroke="#1a9a78" stroke-width="1.5" stroke-opacity="0.6"/>
<rect x="926.5" y="370.8" width="102.5" height="30.2" rx="13.0" fill="url(#gOrN)"/>
<rect x="928.9" y="373.2" width="97.7" height="25.4" rx="10.8" fill="#262626"/>
<rect x="928.9" y="373.2" width="97.7" height="25.4" rx="10.8" fill="#0d0d0c" fill-opacity="0.9"/>
<rect x="929.8" y="374.1" width="95.9" height="23.6" rx="9.8" fill="url(#gPill)"/>
<rect x="929.8" y="374.1" width="95.9" height="14.2" rx="9.8" fill="url(#gGlowTeal)" mask="url(#mGlowH)"/>
<rect x="929.8" y="374.1" width="95.9" height="23.6" rx="9.8" fill="url(#gPillSh)"/>
<text x="1002.0" y="389.2" font-size="9.40" fill="#e2e2e2" font-weight="normal" font-style="normal" text-anchor="end" textLength="55.8" lengthAdjust="spacingAndGlyphs" >Temp Column</text>
<circle cx="1010.2" cy="385.6" r="4.3" fill="#25d6a4"/>
<path d="M1014.9 383.4l2.2 2.2l-2.2 2.2z" fill="#25d6a4"/>
<line x1="1016.2" y1="385.6" x2="1026.0" y2="385.6" stroke="#1a9a78" stroke-width="1.5" stroke-opacity="0.6"/>
<rect x="1286.5" y="286.3" width="102.9" height="30.2" rx="13.0" fill="url(#gOrN)"/>
<rect x="1288.9" y="288.7" width="98.1" height="25.4" rx="10.8" fill="#262626"/>
<rect x="1288.9" y="288.7" width="98.1" height="25.4" rx="10.8" fill="#0d0d0c" fill-opacity="0.9"/>
<rect x="1289.8" y="289.6" width="96.3" height="23.6" rx="9.8" fill="url(#gPill)"/>
<rect x="1289.8" y="289.6" width="96.3" height="14.2" rx="9.8" fill="url(#gGlowTeal)" mask="url(#mGlowH)"/>
<rect x="1289.8" y="289.6" width="96.3" height="23.6" rx="9.8" fill="url(#gPillSh)"/>
<text x="1362.5" y="305.0" font-size="9.40" fill="#e2e2e2" font-weight="normal" font-style="normal" text-anchor="end" >Score</text>
<circle cx="1370.4" cy="301.0" r="4.3" fill="#25d6a4"/>
<path d="M1375.1 298.8l2.2 2.2l-2.2 2.2z" fill="#25d6a4"/>
<line x1="1376.4" y1="301.0" x2="1386.4" y2="301.0" stroke="#1a9a78" stroke-width="1.5" stroke-opacity="0.6"/>
<rect x="1286.5" y="322.5" width="102.9" height="30.0" rx="13.0" fill="url(#gOrN)"/>
<rect x="1288.9" y="324.9" width="98.1" height="25.2" rx="10.8" fill="#262626"/>
<rect x="1288.9" y="324.9" width="98.1" height="25.2" rx="10.8" fill="#0d0d0c" fill-opacity="0.9"/>
<rect x="1289.8" y="325.8" width="96.3" height="23.4" rx="9.8" fill="url(#gPill)"/>
<rect x="1289.8" y="325.8" width="96.3" height="14.0" rx="9.8" fill="url(#gGlowTeal)" mask="url(#mGlowH)"/>
<rect x="1289.8" y="325.8" width="96.3" height="23.4" rx="9.8" fill="url(#gPillSh)"/>
<text x="1362.5" y="341.2" font-size="9.40" fill="#e2e2e2" font-weight="normal" font-style="normal" text-anchor="end" >Best Score</text>
<circle cx="1370.4" cy="337.6" r="4.3" fill="#25d6a4"/>
<path d="M1375.1 335.4l2.2 2.2l-2.2 2.2z" fill="#25d6a4"/>
<line x1="1376.4" y1="337.6" x2="1386.4" y2="337.6" stroke="#1a9a78" stroke-width="1.5" stroke-opacity="0.6"/>
<rect x="123.0" y="419.0" width="268.7" height="67.2" rx="7.0" fill="url(#gOrN)"/>
<rect x="125.6" y="421.6" width="263.5" height="62.0" rx="5.0" fill="#2a200e"/>
<rect x="126.9" y="422.9" width="260.9" height="59.4" rx="4.0" fill="url(#gBody)"/>
<path d="M130.0 422.0h254.7a4 4 0 0 1 4 4v12.8h-262.7v-12.8a4 4 0 0 1 4 -4z" fill="url(#gHdrLitH)"/>
<path d="M130.0 422.0h254.7a4 4 0 0 1 4 4v12.8h-262.7v-12.8a4 4 0 0 1 4 -4z" fill="url(#gHdrLitV)"/>
<path d="M133.1 425.0h6.5l2.5 2.5v9.5h-9z" fill="#ffffff"/>
<rect x="134.6" y="428.5" width="6" height="0.9" fill="#4a5a48"/>
<rect x="134.6" y="430.7" width="6" height="0.9" fill="#4a5a48"/>
<rect x="134.6" y="432.9" width="6" height="0.9" fill="#4a5a48"/>
<rect x="134.6" y="435.1" width="6" height="0.9" fill="#4a5a48"/>
<text x="147.2" y="434.4" font-size="10.60" fill="#e0e0e0" font-weight="normal" font-style="normal" text-anchor="start" textLength="148.8" lengthAdjust="spacingAndGlyphs" stroke="#e0e0e0" stroke-width="0.35">Literal enum Enum_GridCellState</text>
<text x="147.8" y="454.6" font-size="9.40" fill="#e2e2e2" font-weight="normal" font-style="normal" text-anchor="start" >Enum</text>
<circle cx="138.0" cy="461.8" r="3.9" fill="#111" stroke="#0b7466" stroke-width="1.8"/>
<path d="M142.6 459.5l2.3 2.3l-2.3 2.3z" fill="#0b7466"/>
<rect x="153.1" y="457.8" width="141.4" height="19.4" rx="2" fill="#0f0f0f" stroke="#2e2e2e" stroke-width="1"/>
<text x="160.0" y="470.2" font-size="7.60" fill="#bbbbbb" font-weight="normal" font-style="normal" text-anchor="start" letter-spacing="0.3">Computer</text>
<path d="M279.7 466.0l3.3 3.2l3.3 -3.2" fill="none" stroke="#d8d8d8" stroke-width="1.3"/>
<text x="365.0" y="455.0" font-size="9.40" fill="#e2e2e2" font-weight="normal" font-style="normal" text-anchor="end" >Return Value</text>
<circle cx="374.0" cy="451.0" r="4.3" fill="#0b7466"/>
<path d="M378.7 448.8l2.2 2.2l-2.2 2.2z" fill="#0b7466"/>
<rect x="759.0" y="407.4" width="268.7" height="67.2" rx="7.0" fill="url(#gOrN)"/>
<rect x="761.6" y="410.0" width="263.5" height="62.0" rx="5.0" fill="#2a200e"/>
<rect x="762.9" y="411.3" width="260.9" height="59.4" rx="4.0" fill="url(#gBody)"/>
<path d="M766.0 410.4h254.7a4 4 0 0 1 4 4v12.8h-262.7v-12.8a4 4 0 0 1 4 -4z" fill="url(#gHdrLitH)"/>
<path d="M766.0 410.4h254.7a4 4 0 0 1 4 4v12.8h-262.7v-12.8a4 4 0 0 1 4 -4z" fill="url(#gHdrLitV)"/>
<path d="M769.1 413.4h6.5l2.5 2.5v9.5h-9z" fill="#ffffff"/>
<rect x="770.6" y="416.9" width="6" height="0.9" fill="#4a5a48"/>
<rect x="770.6" y="419.1" width="6" height="0.9" fill="#4a5a48"/>
<rect x="770.6" y="421.3" width="6" height="0.9" fill="#4a5a48"/>
<rect x="770.6" y="423.5" width="6" height="0.9" fill="#4a5a48"/>
<text x="783.2" y="422.8" font-size="10.60" fill="#e0e0e0" font-weight="normal" font-style="normal" text-anchor="start" textLength="148.8" lengthAdjust="spacingAndGlyphs" stroke="#e0e0e0" stroke-width="0.35">Literal enum Enum_GridCellState</text>
<text x="783.8" y="443.0" font-size="9.40" fill="#e2e2e2" font-weight="normal" font-style="normal" text-anchor="start" >Enum</text>
<circle cx="774.0" cy="450.2" r="3.9" fill="#111" stroke="#0b7466" stroke-width="1.8"/>
<path d="M778.6 447.9l2.3 2.3l-2.3 2.3z" fill="#0b7466"/>
<rect x="789.1" y="446.2" width="141.4" height="19.4" rx="2" fill="#0f0f0f" stroke="#2e2e2e" stroke-width="1"/>
<text x="796.0" y="458.6" font-size="7.60" fill="#bbbbbb" font-weight="normal" font-style="normal" text-anchor="start" letter-spacing="0.3">Empty</text>
<path d="M915.7 454.4l3.3 3.2l3.3 -3.2" fill="none" stroke="#d8d8d8" stroke-width="1.3"/>
<text x="1001.0" y="443.4" font-size="9.40" fill="#e2e2e2" font-weight="normal" font-style="normal" text-anchor="end" >Return Value</text>
<circle cx="1010.0" cy="439.4" r="4.3" fill="#0b7466"/>
<path d="M1014.7 437.2l2.2 2.2l-2.2 2.2z" fill="#0b7466"/>
<rect x="974.6" y="47.0" width="96.0" height="31.2" rx="14.0" fill="url(#gOrN)"/>
<rect x="977.0" y="49.4" width="91.2" height="26.4" rx="11.8" fill="#262626"/>
<rect x="977.0" y="49.4" width="91.2" height="26.4" rx="11.8" fill="#0d0d0c" fill-opacity="0.9"/>
<rect x="977.9" y="50.3" width="89.4" height="24.6" rx="10.8" fill="url(#gPillDark)"/>
<rect x="977.9" y="50.3" width="89.4" height="24.6" rx="10.8" fill="url(#gPillSh)"/>
<circle cx="989.6" cy="62.9" r="4.6" fill="#25d6a4"/>
<path d="M994.6 60.7l2.2 2.2l-2.2 2.2z" fill="#25d6a4"/>
<circle cx="1022" cy="61.6" r="1.9" fill="#a0a0a0"/>
<circle cx="1052.8" cy="62.9" r="4.6" fill="#f010d8"/>
<path d="M1057.8 60.7l2.2 2.2l-2.2 2.2z" fill="#f010d8"/>
<path d="M972 62.9 L986 62.9" fill="none" stroke="#25d6a4" stroke-width="2.0" stroke-opacity="1.00" stroke-linecap="round"/>
<circle cx="989.6" cy="62.9" r="4.6" fill="#25d6a4"/>
<path d="M994.6 60.7l2.2 2.2l-2.2 2.2z" fill="#25d6a4"/>
<path d="M1058.0 62.8C1059.0 62.7 1062.7 62.7 1064.0 62.0C1065.3 61.3 1066.5 59.9 1066.0 58.5C1065.5 57.1 1063.7 55.1 1061.0 53.5C1058.3 51.9 1054.1 50.2 1050.0 48.8C1045.9 47.4 1040.5 46.8 1036.5 45.0C1032.5 43.2 1028.8 40.6 1025.7 38.3C1022.6 36.0 1019.3 32.2 1018.0 31.0" fill="none" stroke="#e020d0" stroke-width="1.4" stroke-opacity="0.95" stroke-linecap="round"/>
<rect x="1010.2" y="-20.0" width="172.7" height="64.0" rx="7.0" fill="url(#gOrN)"/>
<rect x="1012.8" y="-17.4" width="167.5" height="58.8" rx="5.0" fill="#2a200e"/>
<rect x="1014.1" y="-16.1" width="164.9" height="56.2" rx="4.0" fill="url(#gBodyTop)"/>
<path d="M1167.0 -8.0C1165.8 -3.3 1162.3 11.5 1160.0 20.0C1157.7 28.5 1154.2 39.2 1153.0 43.0" fill="none" stroke="#ffffff" stroke-width="2.5" stroke-opacity="0.22" stroke-linecap="round"/>
<circle cx="1026.0" cy="8.6" r="3.9" fill="#151515" stroke="#f010d8" stroke-width="1.8"/>
<path d="M1030.6 6.3l2.3 2.3l-2.3 2.3z" fill="#f010d8"/>
<text x="1036.2" y="11.9" font-size="9.60" fill="#e8e8e8" font-weight="bold" font-style="normal" text-anchor="start" >G</text>
<rect x="1046.5" y="2.7" width="37.0" height="12.6" fill="none" stroke="#b8b8b8" stroke-width="1"/>
<text x="1050.5" y="12.5" font-size="9.40" fill="#c0c0c0" font-weight="normal" font-style="normal" text-anchor="start" >Score:</text>
<circle cx="1025.4" cy="30.0" r="4.3" fill="#f010d8"/>
<path d="M1030.1 27.8l2.2 2.2l-2.2 2.2z" fill="#f010d8"/>
<text x="1036.2" y="33.6" font-size="9.60" fill="#e8e8e8" font-weight="bold" font-style="normal" text-anchor="start" >H</text>
<rect x="1406.2" y="286.8" width="63.8" height="47.4" rx="8.0" fill="url(#gOrN)"/>
<rect x="1408.6" y="289.2" width="59.0" height="42.6" rx="5.8" fill="#262626"/>
<rect x="1408.6" y="289.2" width="59.0" height="42.6" rx="5.8" fill="#0d0d0c" fill-opacity="0.9"/>
<rect x="1409.5" y="290.1" width="57.2" height="40.8" rx="4.8" fill="url(#gPill)"/>
<rect x="1409.5" y="290.1" width="57.2" height="40.8" rx="4.8" fill="url(#gPillSh)"/>
<circle cx="1422.3" cy="300.9" r="4.6" fill="#8a8587" stroke="#25d6a4" stroke-width="1.8"/>
<circle cx="1422.3" cy="320.5" r="4.6" fill="#8a8587" stroke="#25d6a4" stroke-width="1.8"/>
<rect x="-20.0" y="-20.0" width="78.3" height="94.3" rx="7.0" fill="url(#gOrN)"/>
<rect x="-17.4" y="-17.4" width="73.1" height="89.1" rx="5.0" fill="#2a200e"/>
<rect x="-16.1" y="-16.1" width="70.5" height="86.5" rx="4.0" fill="url(#gBody)"/>
<path d="M38.6 -0.5Q38.6 2.1 41.1 2.1Q43.7 2.1 43.7 -0.5" fill="none" stroke="#d8d8d8" stroke-width="1.2"/>
<polygon points="625.69,220.76 619.96,226.49 611.84,226.49 606.11,220.76 606.11,212.64 611.84,206.91 619.96,206.91 625.69,212.64" fill="none" stroke="#000" stroke-width="3.6"/>
<polygon points="625.69,220.76 619.96,226.49 611.84,226.49 606.11,220.76 606.11,212.64 611.84,206.91 619.96,206.91 625.69,212.64" fill="none" stroke="#f04040" stroke-width="1.6"/>
</svg>
</body></html>
